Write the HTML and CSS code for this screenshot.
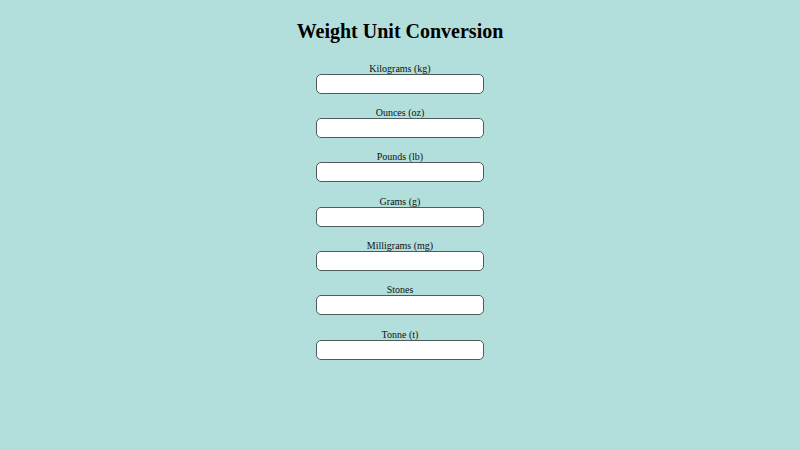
FILE: index.html
```html
<!DOCTYPE html>
<html>
<head>
<meta charset="utf-8">
<title>Weight Unit Conversion</title>
<link rel="stylesheet" href="styles.css">
</head>
<body>
<h1 class="title">Weight Unit Conversion</h1>
<div class="form">
  <div class="field"><label class="label" for="kg">Kilograms (kg)</label><input class="input" id="kg" type="text"></div>
  <div class="field"><label class="label" for="oz">Ounces (oz)</label><input class="input" id="oz" type="text"></div>
  <div class="field"><label class="label" for="lb">Pounds (lb)</label><input class="input" id="lb" type="text"></div>
  <div class="field"><label class="label" for="g">Grams (g)</label><input class="input" id="g" type="text"></div>
  <div class="field"><label class="label" for="mg">Milligrams (mg)</label><input class="input" id="mg" type="text"></div>
  <div class="field"><label class="label" for="st">Stones</label><input class="input" id="st" type="text"></div>
  <div class="field"><label class="label" for="t">Tonne (t)</label><input class="input" id="t" type="text"></div>
</div>
</body>
</html>
```
FILE: styles.css
```css
html, body {
  margin: 0;
  padding: 0;
  background: #b2dfdb;
  font-family: "Liberation Serif", "Times New Roman", serif;
  color: #000;
}
.title {
  margin: 20px 0 0;
  font-size: 20px;
  line-height: 23px;
  font-weight: bold;
  text-align: center;
}
.form {
  margin-top: 19.6px;
  display: flex;
  flex-direction: column;
  align-items: center;
  gap: 13.33px;
}
.field {
  display: flex;
  flex-direction: column;
  align-items: center;
}
.label {
  display: block;
  font-size: 10px;
  line-height: 11px;
  color: #111;
}
.input {
  box-sizing: border-box;
  width: 168px;
  height: 20px;
  margin: 0;
  padding: 0 4px;
  border: 1.2px solid #4f5b5b;
  border-radius: 5px;
  background: #fff;
  font-family: "Liberation Serif", serif;
  font-size: 10px;
  outline: none;
}
```
